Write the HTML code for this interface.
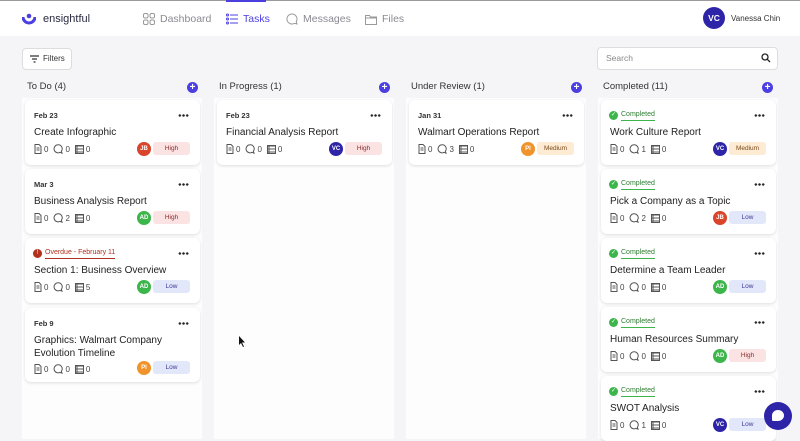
<!DOCTYPE html>
<html><head><meta charset="utf-8"><style>
*{box-sizing:border-box;margin:0;padding:0}
body{width:800px;height:439px;overflow:hidden;background:#f5f5f7;font-family:"Liberation Sans",sans-serif;color:#2b2b33;position:relative}
.hdr{position:absolute;left:0;top:0;width:800px;height:36px;background:#fff;border-top:1px solid #9a9a9a}
.abs{position:absolute}
.nav{position:absolute;top:13px;font-size:10.5px;color:#8a8a92;display:flex;align-items:center;gap:5px}
.col{position:absolute;top:98px;width:180px;height:341px;background:#fdfdfe}
.colh{position:absolute;top:81px;font-size:9.5px;color:#333}
.plus{position:absolute;top:82px;width:11px;height:11px;border-radius:50%;background:#4b3fe0;color:#fff;font-size:10px;line-height:11px;text-align:center;font-weight:bold}
.card{position:absolute;width:175px;height:65px;background:#fff;border-radius:6px;box-shadow:0 1px 3px rgba(0,0,0,.13)}
.date{position:absolute;left:9px;top:11px;font-size:7.5px;font-weight:bold;color:#333}
.dots{position:absolute;right:11px;top:14px;width:11px;height:3px;background:radial-gradient(circle,#222 1.1px,transparent 1.4px) 0 0/3.7px 3px repeat-x}
.title{position:absolute;left:9px;top:26px;font-size:10px;color:#222;line-height:13px;width:155px}
.meta{position:absolute;left:9px;top:44px;font-size:8px;color:#444;display:flex;align-items:center;gap:1px}
.meta svg{margin-right:1px}
.meta span{margin-right:4px}
.av{position:absolute;left:112px;top:42px;width:14px;height:14px;border-radius:50%;color:#fff;font-size:6px;text-align:center;line-height:14px;font-weight:bold}
.badge{position:absolute;left:128px;top:42px;width:37px;height:13px;border-radius:3px;font-size:6.5px;text-align:center;line-height:13px}
.high{background:#fbe3e3;color:#8b2a2a}.low{background:#e3e7fa;color:#3a3a9a}.med{background:#fdebd3;color:#7a4a1a}
.done{position:absolute;left:8px;top:10px;font-size:7px;color:#2e7d32;display:flex;align-items:center;gap:3px}
.done i{display:inline-block;width:9px;height:9px;border-radius:50%;background:#3cb54a;color:#fff;font-size:6px;line-height:9px;text-align:center;font-style:normal}
.done b{font-weight:normal;border-bottom:1px solid #3cb54a;padding-bottom:1px;line-height:9px}
</style></head><body>
<div class="hdr"></div>
<div class="abs" style="left:226px;top:0;width:40px;height:2px;background:#4b3fe0"></div>
<svg class="abs" style="left:22px;top:13px" width="14" height="12" viewBox="0 0 14 12"><path d="M1 4 A6 6 0 0 0 13 4" fill="none" stroke="#4b3fe0" stroke-width="3"/><circle cx="7" cy="3" r="2.3" fill="#4b3fe0"/></svg>
<div class="abs" style="left:43px;top:13px;font-size:11px;color:#2a2a40">ensightful</div>
<div class="nav" style="left:143px"><svg width="12" height="12" viewBox="0 0 12 12" fill="none" stroke="#999"><rect x=".5" y=".5" width="4.5" height="4.5" rx="1.5"/><rect x="7" y=".5" width="4.5" height="4.5" rx="1.5"/><rect x=".5" y="7" width="4.5" height="4.5" rx="1.5"/><rect x="7" y="7" width="4.5" height="4.5" rx="1.5"/></svg>Dashboard</div>
<div class="nav" style="left:226px;color:#4b3fe0"><svg width="12" height="12" viewBox="0 0 12 12" fill="none" stroke="#4b3fe0"><circle cx="1.5" cy="2" r="1"/><circle cx="1.5" cy="6" r="1"/><circle cx="1.5" cy="10" r="1"/><path d="M4 2h8M4 6h8M4 10h8"/></svg>Tasks</div>
<div class="nav" style="left:286px"><svg width="12" height="12" viewBox="0 0 12 12" fill="none" stroke="#999"><path d="M6 1a5 5 0 1 0 2.5 9.3L11 11l-.7-2.5A5 5 0 0 0 6 1z"/></svg>Messages</div>
<div class="nav" style="left:365px"><svg width="12" height="11" viewBox="0 0 12 11" fill="none" stroke="#999"><path d="M.5 1.5h4l1 1.5h6v7.5h-11z M.5 4h11"/></svg>Files</div>
<div class="abs" style="left:703px;top:7px;width:22px;height:22px;border-radius:50%;background:#2e24a8;color:#fff;font-size:8.5px;line-height:22px;text-align:center;font-weight:bold">VC</div>
<div class="abs" style="left:731px;top:14px;font-size:8px;color:#333">Vanessa Chin</div>
<div class="abs" style="left:22px;top:48px;width:50px;height:22px;background:#fff;border:1px solid #ddd;border-radius:4px;font-size:8px;line-height:20px;padding-left:20px;color:#333">Filters</div>
<svg class="abs" style="left:30px;top:55px" width="9" height="8" viewBox="0 0 9 8" stroke="#333" stroke-width="1.2"><path d="M0 1h9M2 4h5M3.5 7h2"/></svg>
<div class="abs" style="left:597px;top:47px;width:181px;height:23px;background:#fff;border:1px solid #ddd;border-radius:4px;font-size:8.5px;line-height:21px;padding-left:8px;color:#888">Search</div>
<svg class="abs" style="left:761px;top:53px" width="10" height="10" viewBox="0 0 10 10" fill="none" stroke="#222" stroke-width="1.3"><circle cx="4" cy="4" r="3"/><path d="M6.2 6.2L9 9"/></svg>

<div class="col" style="left:22px"></div><div class="col" style="left:214px"></div><div class="col" style="left:406px"></div><div class="col" style="left:598px"></div>
<div class="colh" style="left:27px">To Do (4)</div><div class="plus" style="left:187px">+</div>
<div class="colh" style="left:219px">In Progress (1)</div><div class="plus" style="left:379px">+</div>
<div class="colh" style="left:411px">Under Review (1)</div><div class="plus" style="left:571px">+</div>
<div class="colh" style="left:603px">Completed (11)</div><div class="plus" style="left:762px">+</div>

<svg width="0" height="0" style="position:absolute"><defs>
<g id="m"><path d="M1 .5h4l2 2v7H1z" fill="none" stroke="#555"/><path d="M2.5 4h3M2.5 6h3" stroke="#555"/></g>
<g id="c"><path d="M5 .8a4 4 0 1 0 2 7.5l2 .9-.6-2A4 4 0 0 0 5 .8z" fill="none" stroke="#555"/></g>
<g id="l"><path d="M.5 1h8M.5 4h8M.5 7h8M2 1v7" fill="none" stroke="#555"/><rect x=".5" y=".5" width="8" height="8" fill="none" stroke="#555"/></g>
</defs></svg>

<div class="card" style="left:25px;top:100px"><div class="date">Feb 23</div><div class="dots"></div><div class="title">Create Infographic</div><div class="meta"><svg width="8" height="10"><use href="#m"/></svg><span>0</span><svg width="10" height="10"><use href="#c"/></svg><span>0</span><svg width="9" height="9"><use href="#l"/></svg><span>0</span></div><div class="av" style="background:#d9442b">JB</div><div class="badge high">High</div></div>
<div class="card" style="left:25px;top:169px"><div class="date">Mar 3</div><div class="dots"></div><div class="title">Business Analysis Report</div><div class="meta"><svg width="8" height="10"><use href="#m"/></svg><span>0</span><svg width="10" height="10"><use href="#c"/></svg><span>2</span><svg width="9" height="9"><use href="#l"/></svg><span>0</span></div><div class="av" style="background:#3cb54a">AD</div><div class="badge high">High</div></div>
<div class="card" style="left:25px;top:238px"><div class="done" style="color:#b0321e"><i style="background:#b0321e">!</i><b style="border-color:#b0321e">Overdue - February 11</b></div><div class="dots"></div><div class="title">Section 1: Business Overview</div><div class="meta"><svg width="8" height="10"><use href="#m"/></svg><span>0</span><svg width="10" height="10"><use href="#c"/></svg><span>0</span><svg width="9" height="9"><use href="#l"/></svg><span>5</span></div><div class="av" style="background:#3cb54a">AD</div><div class="badge low">Low</div></div>
<div class="card" style="left:25px;top:308px;height:74px"><div class="date">Feb 9</div><div class="dots"></div><div class="title">Graphics: Walmart Company Evolution Timeline</div><div class="meta" style="top:56px"><svg width="8" height="10"><use href="#m"/></svg><span>0</span><svg width="10" height="10"><use href="#c"/></svg><span>0</span><svg width="9" height="9"><use href="#l"/></svg><span>0</span></div><div class="av" style="background:#f0932b;top:53px">PI</div><div class="badge low" style="top:53px">Low</div></div>

<div class="card" style="left:217px;top:100px"><div class="date">Feb 23</div><div class="dots"></div><div class="title">Financial Analysis Report</div><div class="meta"><svg width="8" height="10"><use href="#m"/></svg><span>0</span><svg width="10" height="10"><use href="#c"/></svg><span>0</span><svg width="9" height="9"><use href="#l"/></svg><span>0</span></div><div class="av" style="background:#2e24a8">VC</div><div class="badge high">High</div></div>
<div class="card" style="left:409px;top:100px"><div class="date">Jan 31</div><div class="dots"></div><div class="title">Walmart Operations Report</div><div class="meta"><svg width="8" height="10"><use href="#m"/></svg><span>0</span><svg width="10" height="10"><use href="#c"/></svg><span>3</span><svg width="9" height="9"><use href="#l"/></svg><span>0</span></div><div class="av" style="background:#f0932b">PI</div><div class="badge med">Medium</div></div>

<div class="card" style="left:601px;top:100px"><div class="done"><i>✓</i><b>Completed</b></div><div class="dots"></div><div class="title">Work Culture Report</div><div class="meta"><svg width="8" height="10"><use href="#m"/></svg><span>0</span><svg width="10" height="10"><use href="#c"/></svg><span>1</span><svg width="9" height="9"><use href="#l"/></svg><span>0</span></div><div class="av" style="background:#2e24a8">VC</div><div class="badge med">Medium</div></div>
<div class="card" style="left:601px;top:169px"><div class="done"><i>✓</i><b>Completed</b></div><div class="dots"></div><div class="title">Pick a Company as a Topic</div><div class="meta"><svg width="8" height="10"><use href="#m"/></svg><span>0</span><svg width="10" height="10"><use href="#c"/></svg><span>2</span><svg width="9" height="9"><use href="#l"/></svg><span>0</span></div><div class="av" style="background:#d9442b">JB</div><div class="badge low">Low</div></div>
<div class="card" style="left:601px;top:238px"><div class="done"><i>✓</i><b>Completed</b></div><div class="dots"></div><div class="title">Determine a Team Leader</div><div class="meta"><svg width="8" height="10"><use href="#m"/></svg><span>0</span><svg width="10" height="10"><use href="#c"/></svg><span>0</span><svg width="9" height="9"><use href="#l"/></svg><span>0</span></div><div class="av" style="background:#3cb54a">AD</div><div class="badge low">Low</div></div>
<div class="card" style="left:601px;top:307px"><div class="done"><i>✓</i><b>Completed</b></div><div class="dots"></div><div class="title">Human Resources Summary</div><div class="meta"><svg width="8" height="10"><use href="#m"/></svg><span>0</span><svg width="10" height="10"><use href="#c"/></svg><span>0</span><svg width="9" height="9"><use href="#l"/></svg><span>0</span></div><div class="av" style="background:#3cb54a">AD</div><div class="badge high">High</div></div>
<div class="card" style="left:601px;top:376px"><div class="done"><i>✓</i><b>Completed</b></div><div class="dots"></div><div class="title">SWOT Analysis</div><div class="meta"><svg width="8" height="10"><use href="#m"/></svg><span>0</span><svg width="10" height="10"><use href="#c"/></svg><span>1</span><svg width="9" height="9"><use href="#l"/></svg><span>0</span></div><div class="av" style="background:#2e24a8">VC</div><div class="badge low">Low</div></div>

<div class="abs" style="left:764px;top:402px;width:28px;height:28px;border-radius:50%;background:#2e24a8"></div>
<div class="abs" style="left:772px;top:410px;width:12px;height:11px;border-radius:50% 50% 50% 10%;background:#fff"></div>
<svg class="abs" style="left:239px;top:336px" width="7" height="11" viewBox="0 0 7 11"><path d="M0 0v9l2-2 2 4 1-.5-2-4h3z" fill="#111"/></svg>
</body></html>
